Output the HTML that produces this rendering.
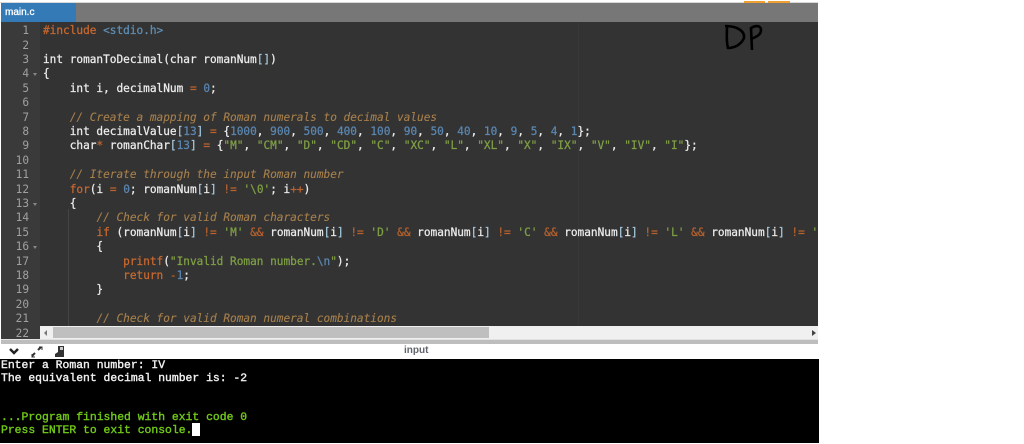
<!DOCTYPE html>
<html>
<head>
<meta charset="utf-8">
<style>
html,body{margin:0;padding:0;background:#fff;width:1024px;height:444px;overflow:hidden}
div{position:absolute}
#ed{left:1px;top:22px;width:817px;height:304px;background:#333}
#gut{left:1px;top:22px;width:39px;height:318px;background:#3a3a3a}
.n,.l{font-family:"DejaVu Sans Mono","Liberation Mono",monospace;font-size:11.1px;line-height:14.4px;height:14.4px;white-space:pre;margin-top:1.2px}
.n{left:1px;width:28px;text-align:right;color:#a0a0a0}
.l{left:43px;color:#ececec;width:775px;overflow:hidden;-webkit-text-stroke:.25px}
.k{color:#c9682f}.s{color:#7f9f45}.d{color:#5a86b0}.c{color:#a8804c;font-style:italic;-webkit-text-stroke:.1px}.o{color:#b8622e}.b{color:#a4c6dc}.h{color:#5f8fb5}
.t{font-family:"Liberation Mono",monospace;font-size:11.4px;line-height:13px;height:13px;left:1px;white-space:pre;-webkit-text-stroke:.4px}
</style>
</head>
<body>
<div style="left:0;top:2px;width:818px;height:1px;background:#d8d8d8"></div>
<div style="left:672px;top:0;width:72px;height:2px;background:#fff"></div>
<div style="left:744px;top:1px;width:21px;height:2px;background:#f0a030"></div>
<div style="left:768px;top:1px;width:22px;height:2px;background:#f0a030"></div>
<div style="left:1px;top:3px;width:817px;height:19px;background:#777"></div>
<div style="left:1px;top:3px;width:75px;height:19px;background:#337ab7;color:#fff;font:10px/19px 'Liberation Sans',sans-serif;-webkit-text-stroke:.3px;text-indent:4px">main.c</div>
<div id="ed"></div>
<div id="gut"></div>
<div style="left:578px;top:22px;width:1px;height:304px;background:#383838"></div>
<div style="left:68px;top:209px;width:1px;height:117px;background:#444"></div>

<div class="n" style="top:23px">1</div>
<div class="n" style="top:37.4px">2</div>
<div class="n" style="top:51.8px">3</div>
<div class="n" style="top:66.2px">4</div>
<div class="n" style="top:80.6px">5</div>
<div class="n" style="top:95px">6</div>
<div class="n" style="top:109.4px">7</div>
<div class="n" style="top:123.8px">8</div>
<div class="n" style="top:138.2px">9</div>
<div class="n" style="top:152.6px">10</div>
<div class="n" style="top:167px">11</div>
<div class="n" style="top:181.4px">12</div>
<div class="n" style="top:195.8px">13</div>
<div class="n" style="top:210.2px">14</div>
<div class="n" style="top:224.6px">15</div>
<div class="n" style="top:239px">16</div>
<div class="n" style="top:253.4px">17</div>
<div class="n" style="top:267.8px">18</div>
<div class="n" style="top:282.2px">19</div>
<div class="n" style="top:296.6px">20</div>
<div class="n" style="top:311px">21</div>
<div class="n" style="top:325.4px;height:13px;overflow:hidden">22</div>
<div style="left:33px;top:73px;width:0;height:0;border-left:2px solid transparent;border-right:2px solid transparent;border-top:3px solid #888"></div>
<div style="left:33px;top:203px;width:0;height:0;border-left:2px solid transparent;border-right:2px solid transparent;border-top:3px solid #888"></div>
<div style="left:33px;top:246px;width:0;height:0;border-left:2px solid transparent;border-right:2px solid transparent;border-top:3px solid #888"></div>

<div class="l" style="top:23px"><span class="k">#include</span> <span class="h">&lt;stdio.h&gt;</span></div>
<div class="l" style="top:51.8px">int romanToDecimal(char romanNum<span class="b">[]</span>)</div>
<div class="l" style="top:66.2px">{</div>
<div class="l" style="top:80.6px">    int i, decimalNum <span class="o">=</span> <span class="d">0</span>;</div>
<div class="l" style="top:109.4px">    <span class="c">// Create a mapping of Roman numerals to decimal values</span></div>
<div class="l" style="top:123.8px">    int decimalValue<span class="b">[</span><span class="d">13</span><span class="b">]</span> <span class="o">=</span> {<span class="d">1000</span>, <span class="d">900</span>, <span class="d">500</span>, <span class="d">400</span>, <span class="d">100</span>, <span class="d">90</span>, <span class="d">50</span>, <span class="d">40</span>, <span class="d">10</span>, <span class="d">9</span>, <span class="d">5</span>, <span class="d">4</span>, <span class="d">1</span>};</div>
<div class="l" style="top:138.2px">    char<span class="o">*</span> romanChar<span class="b">[</span><span class="d">13</span><span class="b">]</span> <span class="o">=</span> {<span class="s">"M"</span>, <span class="s">"CM"</span>, <span class="s">"D"</span>, <span class="s">"CD"</span>, <span class="s">"C"</span>, <span class="s">"XC"</span>, <span class="s">"L"</span>, <span class="s">"XL"</span>, <span class="s">"X"</span>, <span class="s">"IX"</span>, <span class="s">"V"</span>, <span class="s">"IV"</span>, <span class="s">"I"</span>};</div>
<div class="l" style="top:167px">    <span class="c">// Iterate through the input Roman number</span></div>
<div class="l" style="top:181.4px">    <span class="k">for</span>(i <span class="o">=</span> <span class="d">0</span>; romanNum<span class="b">[</span>i<span class="b">]</span> <span class="o">!=</span> <span class="s">'\0'</span>; i<span class="o">++</span>)</div>
<div class="l" style="top:195.8px">    {</div>
<div class="l" style="top:210.2px">        <span class="c">// Check for valid Roman characters</span></div>
<div class="l" style="top:224.6px">        <span class="k">if</span> (romanNum<span class="b">[</span>i<span class="b">]</span> <span class="o">!=</span> <span class="s">'M'</span> <span class="o">&amp;&amp;</span> romanNum<span class="b">[</span>i<span class="b">]</span> <span class="o">!=</span> <span class="s">'D'</span> <span class="o">&amp;&amp;</span> romanNum<span class="b">[</span>i<span class="b">]</span> <span class="o">!=</span> <span class="s">'C'</span> <span class="o">&amp;&amp;</span> romanNum<span class="b">[</span>i<span class="b">]</span> <span class="o">!=</span> <span class="s">'L'</span> <span class="o">&amp;&amp;</span> romanNum<span class="b">[</span>i<span class="b">]</span> <span class="o">!=</span> <span class="s">'V'</span></div>
<div class="l" style="top:239px">        {</div>
<div class="l" style="top:253.4px">            <span class="k">printf</span>(<span class="s">"Invalid Roman number.</span><span class="d">\n</span><span class="s">"</span>);</div>
<div class="l" style="top:267.8px">            <span class="k">return</span> <span class="o">-</span><span class="d">1</span>;</div>
<div class="l" style="top:282.2px">        }</div>
<div class="l" style="top:311px">        <span class="c">// Check for valid Roman numeral combinations</span></div>

<div style="left:40px;top:326px;width:778px;height:14px;background:#f0f0f0"></div>
<div style="left:53px;top:327px;width:436px;height:11px;background:#bfbfbf"></div>
<div style="left:44px;top:330px;width:0;height:0;border-top:3px solid transparent;border-bottom:3px solid transparent;border-right:3px solid #777"></div>
<div style="left:812px;top:330px;width:0;height:0;border-top:3px solid transparent;border-bottom:3px solid transparent;border-left:4px solid #444"></div>
<div style="left:1px;top:339px;width:817px;height:5px;background:#bdbdbd"></div>
<div style="left:1px;top:339px;width:817px;height:1px;background:#e2e2e2"></div>

<svg style="position:absolute;left:0;top:344px" width="80" height="15" viewBox="0 0 80 15">
<path d="M10 5 L14 9 L18 5" fill="none" stroke="#222" stroke-width="2.4"/>
<path d="M32 12 L35 9 M38 6 L41 3" fill="none" stroke="#333" stroke-width="2"/>
<path d="M32 10 V13 H35 M39 3 H42 V6" fill="none" stroke="#333" stroke-width="1"/>
<path d="M58 2 H64 V13 H55 V10 L58 8 Z" fill="#333"/>
<rect x="60" y="3" width="3" height="3" fill="#ccc"/>
</svg>
<div style="left:404px;top:345px;font:bold 10px/12px 'Liberation Sans',sans-serif;color:#60646c">input</div>

<div style="left:0;top:359px;width:819px;height:84px;background:#000"></div>
<div class="t" style="top:360px;color:#f0f0f0">Enter a Roman number: IV</div>
<div class="t" style="top:373px;color:#f0f0f0">The equivalent decimal number is: -2</div>
<div class="t" style="top:411.5px;color:#6fc718">...Program finished with exit code 0</div>
<div class="t" style="top:424.5px;color:#6fc718">Press ENTER to exit console.</div>
<div style="left:192px;top:423px;width:8px;height:13px;background:#fff"></div>

<svg style="position:absolute;left:720px;top:20px" width="50" height="36" viewBox="0 0 50 36">
<path d="M7 7 C7 14 6 21 8 28 C14 28 21 25 24 18 C25 11 17 6 5 6" fill="none" stroke="#000" stroke-width="2.6"/>
<path d="M31 8 L32 30 M30 9 C35 5 41 5 41 10 C41 15 36 17 31 19" fill="none" stroke="#000" stroke-width="2.6"/>
</svg>
</body>
</html>
